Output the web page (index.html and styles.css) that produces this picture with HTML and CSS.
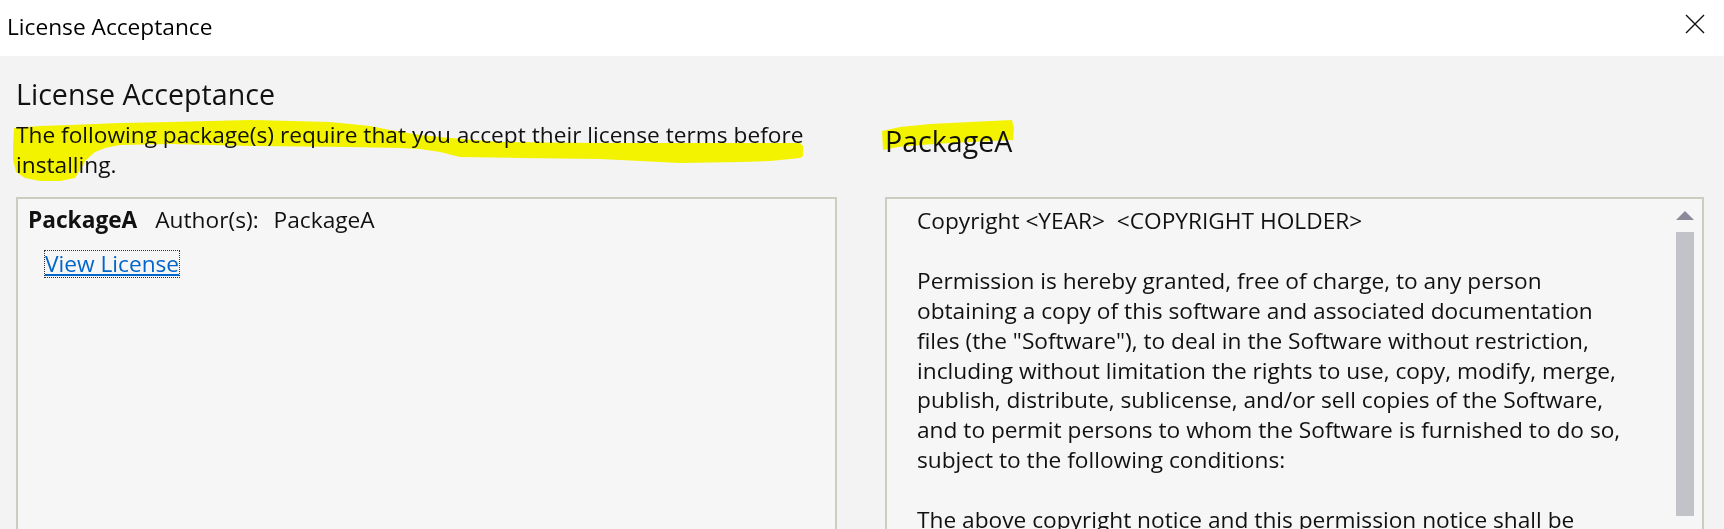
FILE: index.html
```html
<!DOCTYPE html>
<html lang="en">
<head>
<meta charset="utf-8">
<title>License Acceptance</title>
<link rel="stylesheet" href="styles.css">
</head>
<body>
<div class="window">
  <header class="titlebar">
    <span class="title">License Acceptance</span>
    <svg class="close" viewBox="0 0 20 20" aria-label="Close">
      <path d="M1 1 L19 19 M19 1 L1 19" stroke="#111" stroke-width="1.4" fill="none"/>
    </svg>
  </header>
  <main class="content">
    <section class="intro">
      <h1 class="heading">License Acceptance</h1>
      <p class="desc">The following package(s) require that you accept their license terms before<br>installing.</p>
    </section>
    <section class="detail-head">
      <h2 class="heading pkg-heading">PackageA</h2>
    </section>
    <div class="box list-box">
      <div class="pkg-row">
        <span class="pkg-name">PackageA</span>
        <span class="pkg-label">Author(s):</span>
        <span class="pkg-author">PackageA</span>
      </div>
      <a class="view-license" href="#">View License</a>
    </div>
    <div class="box license-box">
      <div class="license-text">
        <p class="copyright">Copyright &lt;YEAR&gt;  &lt;COPYRIGHT HOLDER&gt;</p>
        <p>Permission is hereby granted, free of charge, to any person<br>obtaining a copy of this software and associated documentation<br>files (the "Software"), to deal in the Software without restriction,<br>including without limitation the rights to use, copy, modify, merge,<br>publish, distribute, sublicense, and/or sell copies of the Software,<br>and to permit persons to whom the Software is furnished to do so,<br>subject to the following conditions:</p>
        <p>The above copyright notice and this permission notice shall be</p>
      </div>
      <div class="scrollbar">
        <svg class="arrow" viewBox="0 0 18 10"><polygon points="0,10 9,1 18,10" fill="#8a8a99"/></svg>
        <div class="thumb"></div>
      </div>
    </div>
  </main>
  <svg class="highlights" viewBox="0 0 1724 529" width="1724" height="529">
    <path fill="#ffff00" d="M14,128 L40,126 L70,125 L120,123 L170,122 L250,120 L330,122 L370,126 L390,130 L420,135 L450,138 L500,142 L600,143 L700,143 L800,143 L803,146 L803,156 L800,158 L770,161 L740,162 L680,163 L600,159 L520,158 L460,157 L440,152 L420,149 L400,148 L350,147 L250,146 L170,144 L120,145 L105,148 L95,152 L86,160 L80,170 L75,178 L60,181 L40,181 L25,178 L16,172 L13,160 L13,145 Z"/>
    <path fill="#ffff00" d="M882,131 L900,127 L930,124 L970,122 L1012,120 L1014,128 L1013,140 L990,141 L950,143 L920,145 L898,147 L883,150 Z"/>
  </svg>
</div>
</body>
</html>
```

FILE: styles.css
```css
html, body {
  margin: 0;
  padding: 0;
}

body {
  width: 1724px;
  height: 529px;
  overflow: hidden;
  background: #f3f3f3;
  font-family: "Open Sans", "Noto Sans", sans-serif;
  color: #000;
}

.window {
  position: relative;
  height: 529px;
  overflow: hidden;
}

.titlebar {
  height: 56px;
  box-sizing: border-box;
  background: #ffffff;
  display: flex;
  justify-content: space-between;
  align-items: flex-start;
  padding: 0 19px 0 7px;
}

.title {
  font-size: 22.7px;
  line-height: 30px;
  margin-top: 12px;
  color: #000;
}

.close {
  width: 20px;
  height: 20px;
  margin-top: 14px;
  display: block;
}

.content {
  display: grid;
  grid-template-columns: 821px 819px;
  grid-template-rows: 141px auto;
  column-gap: 48px;
  padding-left: 16px;
}

.intro {
  padding-top: 20px;
}

.heading {
  margin: 0;
  font-size: 28.6px;
  line-height: 36px;
  font-weight: 400;
  color: #111;
}

.desc {
  margin: 8px 0 0;
  font-size: 22.7px;
  line-height: 30px;
  color: #111;
}

.detail-head {
  padding-top: 67px;
}

.pkg-heading {
  margin-left: 0;
}

.box {
  border: 2px solid #cdcdbf;
  background: #f6f6f6;
  height: 420px;
  box-sizing: border-box;
}

.list-box {
  padding: 6px 10px 0;
}

.pkg-row {
  display: flex;
  font-size: 22.7px;
  line-height: 30px;
  color: #111;
}

.pkg-name {
  font-weight: 700;
}

.pkg-label {
  margin-left: 18px;
}

.pkg-author {
  margin-left: 15px;
}

.view-license {
  display: inline-block;
  margin: 15px 0 0 16px;
  font-size: 22.7px;
  line-height: 26px;
  color: #0066cc;
  border: 1px dotted #333;
  text-decoration: underline;
}

.license-box {
  display: flex;
  padding: 7px 8px 0 30px;
}

.license-text {
  flex: 1;
  font-size: 22.7px;
  line-height: 29.9px;
  white-space: nowrap;
  color: #111;
}

.license-text p {
  margin: 0 0 29.9px;
}

.license-text .copyright {
  white-space: pre;
}

.scrollbar {
  width: 18px;
  padding-top: 4px;
  display: flex;
  flex-direction: column;
  gap: 12px;
}

.arrow {
  display: block;
  width: 18px;
  height: 10px;
}

.thumb {
  height: 284px;
  background: #c2c2c9;
}

.highlights {
  position: absolute;
  top: 0;
  left: 0;
  pointer-events: none;
  mix-blend-mode: multiply;
}
```
